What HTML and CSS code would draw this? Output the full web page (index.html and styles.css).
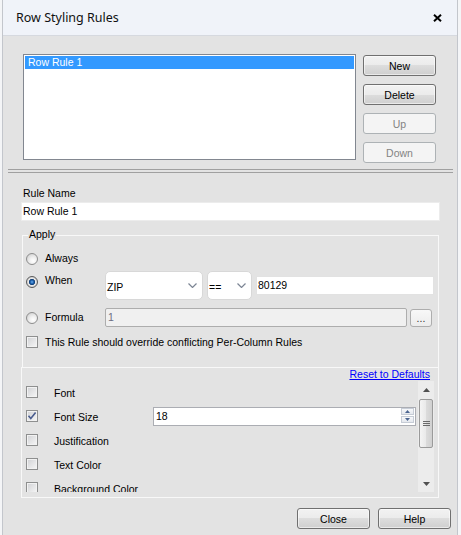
FILE: index.html
```html
<!DOCTYPE html>
<html>
<head>
<meta charset="utf-8">
<title>Row Styling Rules</title>
<link rel="stylesheet" href="styles.css">
</head>
<body>
<div class="window">
  <div class="titlebar">
    <span class="title">Row Styling Rules</span>
    <svg class="close" width="9" height="8" viewBox="0 0 9 8"><path d="M1 0.8L8 7.2M8 0.8L1 7.2" stroke="#000" stroke-width="2" fill="none"/></svg>
  </div>

  <div class="top">
    <div class="listbox"><div class="item sel">Row Rule 1</div></div>
    <div class="btncol">
      <div class="btn">New</div>
      <div class="btn">Delete</div>
      <div class="btn disabled">Up</div>
      <div class="btn disabled">Down</div>
    </div>
  </div>

  <div class="sep"></div>

  <div class="lbl rulename">Rule Name</div>
  <div class="textbox name">Row Rule 1</div>

  <div class="group">
    <span class="legend">Apply</span>
    <div class="row always"><span class="radio"></span><span class="rlabel">Always</span></div>
    <div class="row when">
      <span class="radio checked"></span><span class="rlabel">When</span>
      <div class="combo zip"><span class="ctext">ZIP</span><svg width="9" height="5" viewBox="0 0 9 5"><path d="M0.5 0.5L4.5 4.5L8.5 0.5" stroke="#7c8594" stroke-width="1.2" fill="none"/></svg></div>
      <div class="combo op"><span class="ctext">==</span><svg width="9" height="5" viewBox="0 0 9 5"><path d="M0.5 0.5L4.5 4.5L8.5 0.5" stroke="#7c8594" stroke-width="1.2" fill="none"/></svg></div>
      <div class="textbox val">80129</div>
    </div>
    <div class="row formula">
      <span class="radio"></span><span class="rlabel">Formula</span>
      <div class="textbox disabledbox">1</div>
      <div class="ellipsis">...</div>
    </div>
    <div class="row chk">
      <span class="cb"></span><span class="rlabel wide">This Rule should override conflicting Per-Column Rules</span>
    </div>
  </div>

  <div class="props">
    <div class="linkrow"><a class="link">Reset to Defaults</a></div>
    <div class="plist">
      <div class="prows">
        <div class="prow"><span class="cb"></span><span class="plabel">Font</span></div>
        <div class="prow"><span class="cb checked"><svg width="10" height="10" viewBox="0 0 10 10"><path d="M1.5 4.8L3.8 7.6L8.6 1.6" stroke="#4a5d8f" stroke-width="1.6" fill="none"/></svg></span><span class="plabel">Font Size</span>
          <div class="spinbox"><span class="stext">18</span>
            <div class="spin">
              <div class="sbtn"><svg width="5" height="3" viewBox="0 0 5 3"><path d="M0 3L2.5 0L5 3Z" fill="#4c6590"/></svg></div>
              <div class="sbtn"><svg width="5" height="3" viewBox="0 0 5 3"><path d="M0 0L2.5 3L5 0Z" fill="#4c6590"/></svg></div>
            </div>
          </div>
        </div>
        <div class="prow"><span class="cb"></span><span class="plabel">Justification</span></div>
        <div class="prow"><span class="cb"></span><span class="plabel">Text Color</span></div>
        <div class="prow"><span class="cb"></span><span class="plabel">Background Color</span></div>
      </div>
      <div class="vscroll">
        <div class="sarrow"><svg width="7" height="4" viewBox="0 0 7 4"><path d="M0 4L3.5 0L7 4Z" fill="#505050"/></svg></div>
        <div class="thumb"><svg width="7" height="6" viewBox="0 0 7 6"><path d="M0 0.5H7M0 2.5H7M0 4.5H7" stroke="#6a6a6a" stroke-width="1"/></svg></div>
        <div class="track"></div>
        <div class="sarrow"><svg width="7" height="4" viewBox="0 0 7 4"><path d="M0 0L3.5 4L7 0Z" fill="#505050"/></svg></div>
      </div>
    </div>
  </div>

  <div class="footer">
    <div class="btn">Close</div>
    <div class="btn">Help</div>
  </div>
</div>
</body>
</html>
```

FILE: styles.css
```css
* { box-sizing: border-box; }
html, body { margin: 0; padding: 0; }
body {
  width: 461px;
  height: 535px;
  overflow: hidden;
  background: #f4f5f7;
  font-family: "Liberation Sans", Arial, sans-serif;
  font-size: 10.5px;
  line-height: 13px;
  color: #000;
}
.window {
  margin-left: 2px;
  width: 456px;
  height: 535px;
  border-left: 1px solid #c3c6cc;
  border-right: 1px solid #c3c6cc;
  background: #e3e3e3;
  display: flex;
  flex-direction: column;
}
.titlebar {
  height: 36px;
  flex: none;
  background: #f0f3f9;
  border-bottom: 1px solid #d6d9df;
  display: flex;
  align-items: center;
  justify-content: space-between;
  padding: 0 15px 0 13px;
}
.title {
  font-family: "Noto Sans", "Open Sans", sans-serif;
  font-size: 12.5px;
  line-height: 17px;
  color: #111;
}
.close { display: block; margin-top: 1px; }

.top {
  display: flex;
  gap: 7px;
  margin: 18px 0 0 20px;
}
.listbox {
  width: 333px;
  height: 106px;
  border: 1px solid #828790;
  background: #fff;
  padding: 1px;
}
.item.sel {
  height: 13px;
  background: #3399ff;
  color: #fff;
  padding-left: 3px;
}
.btncol {
  display: flex;
  flex-direction: column;
  gap: 8px;
  margin-top: 1px;
}
.btn {
  width: 73px;
  height: 21px;
  border: 1px solid #707070;
  border-radius: 3px;
  background: linear-gradient(#f2f2f2 0%, #ebebeb 50%, #dddddd 50%, #cfcfcf 100%);
  box-shadow: inset 0 0 0 1px rgba(255,255,255,0.55);
  text-align: center;
  padding-top: 1px;
  line-height: 18px;
}
.btn.disabled {
  border-color: #adb2b5;
  background: #f4f4f4;
  box-shadow: none;
  color: #838383;
}

.sep {
  margin: 6px 0 0 5px;
  width: 445px;
  height: 4px;
  border-top: 1px solid #a0a0a0;
  border-bottom: 1px solid #a0a0a0;
}

.rulename { margin: 14px 0 0 20px; }
.textbox {
  background: #fff;
  border: 1px solid #ececec;
  padding: 0 1px;
  line-height: 17px;
  height: 19px;
  white-space: nowrap;
}
.textbox.name { margin: 2px 0 0 18px; width: 419px; }

.group {
  position: relative;
  margin: 14px 0 0 19px;
  width: 417px;
  border: 1px solid #f8f8f8;
  border-bottom: none;
  padding: 16px 0 19px 3px;
}
.legend {
  position: absolute;
  top: -8px;
  left: 5px;
  padding: 0 1px;
  background: #e3e3e3;
}
.row { display: flex; }
.row.always { height: 13px; align-items: center; }
.row.when { height: 29px; margin-top: 6px; align-items: flex-start; }
.row.formula { height: 19px; margin-top: 8px; align-items: center; }
.row.chk { height: 12px; margin-top: 9px; align-items: center; }

.radio {
  flex: none;
  width: 12px;
  height: 12px;
  border-radius: 50%;
  border: 1px solid #8d8d8d;
  background: radial-gradient(circle at 62% 68%, #ffffff 0, #f1f1f1 35%, #d2d2d2 85%);
  margin-right: 7px;
}
.radio.checked {
  border-color: #5a5a5a;
  background: radial-gradient(circle at 50% 50%, #6fb0f0 0, #2165b0 1.6px, #0f3c74 2.8px, #ececec 3.3px, #d2d2d2 5px);
}
.row.when .radio { margin-top: 5px; }
.rlabel { width: 60px; flex: none; }
.row.when .rlabel { margin-top: 3px; }
.rlabel.wide { width: auto; }

.combo {
  flex: none;
  height: 29px;
  background: #fff;
  border: 1px solid #d8d8d8;
  border-radius: 5px;
  display: flex;
  align-items: center;
  justify-content: space-between;
  padding: 0 5px 0 1px;
  margin-right: 4px;
}
.combo svg { display: block; }
.ctext { margin-top: 4px; }
.combo.zip { width: 98px; }
.combo.op { width: 45px; }
.textbox.val {
  width: 178px;
  margin-top: 5px;
  border-color: #e2e2e2;
}
.textbox.disabledbox {
  width: 302px;
  background: #f0f0f0;
  border-color: #adadad;
  border-radius: 2px;
  padding-left: 2px;
  color: #6d6d82;
}
.ellipsis {
  width: 22px;
  height: 18px;
  margin-left: 3px;
  border: 1px solid #adadad;
  border-radius: 3px;
  background: linear-gradient(#f8f8f8, #ececec);
  text-align: center;
  line-height: 16px;
  color: #333;
}

.cb {
  flex: none;
  width: 12px;
  height: 12px;
  border: 1px solid #8e8f8f;
  background: linear-gradient(135deg, #d0d1d4, #f7f7f7);
  box-shadow: inset 0 0 0 1px #f2f2f2;
  display: flex;
  align-items: center;
  justify-content: center;
}
.row.chk .cb { margin-right: 7px; }
.cb svg { display: block; }

.props {
  margin-left: 18px;
  width: 418px;
  height: 131px;
  flex: none;
  border: 1px solid #f8f8f8;
}
.linkrow {
  height: 13px;
  text-align: right;
  padding-right: 8px;
}
.link {
  color: #0000ff;
  text-decoration: underline;
}
.plist {
  display: flex;
  height: 111px;
  margin-right: 4px;
}
.prows {
  flex: 1;
  overflow: hidden;
}
.prow {
  height: 24px;
  display: flex;
  align-items: flex-start;
  padding-left: 4px;
}
.prow .cb { margin-top: 5px; margin-right: 16px; }
.plabel { margin-top: 6px; width: 99px; flex: none; white-space: nowrap; }
.spinbox {
  margin-top: 2px;
  width: 263px;
  height: 19px;
  background: #fff;
  border: 1px solid #abadb3;
  display: flex;
  justify-content: space-between;
  align-items: flex-start;
}
.stext { padding-left: 2px; line-height: 17px; }
.spin {
  width: 13px;
  display: flex;
  flex-direction: column;
  gap: 1px;
  margin-right: 1px;
}
.sbtn {
  height: 7px;
  border: 1px solid #c6ccd6;
  background: linear-gradient(#f7f8fa, #e4e8ee);
  display: flex;
  align-items: center;
  justify-content: center;
}
.sbtn svg { display: block; }

.vscroll {
  width: 16px;
  flex: none;
  background: #ececec;
  display: flex;
  flex-direction: column;
  align-items: center;
}
.sarrow {
  height: 17px;
  width: 16px;
  display: flex;
  align-items: center;
  justify-content: center;
}
.thumb {
  margin-top: 1px;
  width: 14px;
  height: 49px;
  border: 1px solid #9a9a9a;
  border-radius: 2px;
  background: linear-gradient(to right, #f4f4f4, #e9e9e9 50%, #dcdcdc 51%, #d0d0d0);
  display: flex;
  align-items: center;
  justify-content: center;
}
.thumb svg { display: block; }
.track { flex: 1; }

.footer {
  display: flex;
  justify-content: flex-end;
  gap: 8px;
  margin: 10px 6px 0 0;
}
```
